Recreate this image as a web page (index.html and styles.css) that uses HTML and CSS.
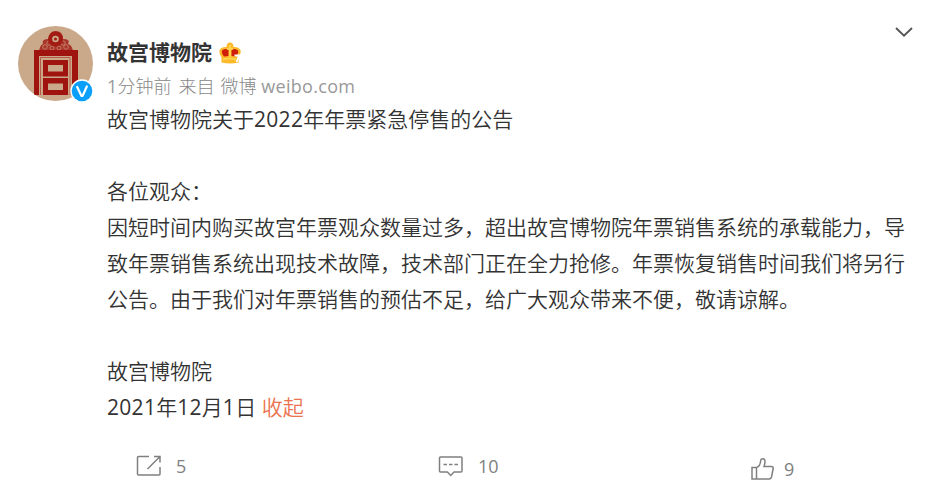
FILE: index.html
```html
<!DOCTYPE html>
<html lang="zh-CN">
<head>
  <meta charset="UTF-8" />
  <meta name="viewport" content="width=device-width, initial-scale=1.0" />
  <title>故宫博物院</title>
  <link rel="stylesheet" href="styles.css">
</head>
<body>

  <div class="card">
    <div class="avatar">
      <svg class="avatar-img" viewBox="0 0 75 75">
        <defs>
          <clipPath id="round"><circle cx="37.5" cy="37.5" r="37.5" /></clipPath>
        </defs>
        <g clip-path="url(#round)">
          <rect width="75" height="75" fill="#caa98a" />
          <path d="M21 25Q22 19 25 18Q23 13 31 13Q31 5 37.5 5Q45 5 45 13Q53 13 50 18Q54 19 55 25Z" fill="#a9352a" />
          <g fill="none" stroke="#c98b72" stroke-width=".8">
            <circle cx="27" cy="21" r="2.3" />
            <circle cx="31" cy="17" r="2.2" />
            <circle cx="34" cy="22" r="2" />
            <circle cx="45" cy="17" r="2.2" />
            <circle cx="41" cy="22" r="2" />
            <circle cx="48" cy="21" r="2.3" />
          </g>
          <circle cx="37.5" cy="13" r="7.5" fill="#a31a12" />
          <circle cx="37.5" cy="13" r="3.3" fill="#caa98a" />
          <circle cx="37.5" cy="13" r="1.5" fill="#a31a12" />
          <path d="M16 24H60V75H54V30H21V69H16Z" fill="#a01410" />
          <path d="M22.5 69V31.5H52V69" fill="none" stroke="#b65a47" stroke-width="1" />
          <path d="M25 34H50V50.500H25ZM30 39V45.500H45V39Z" fill="#a01410" fill-rule="evenodd" />
          <path d="M25 52H50V69H25ZM30 57.500V64H45V57.500Z" fill="#a01410" fill-rule="evenodd" />
        </g>
      </svg>
      <svg class="verified" viewBox="0 0 24 24">
        <circle cx="12" cy="12" r="11.700" fill="#fff" />
        <circle cx="12" cy="12" r="10.300" fill="#0a9ffb" />
        <path d="M7.200 8L11.200 16.500Q12 17.500 12.800 16.500L16.800 7.500" fill="none" stroke="#fff" stroke-width="2.200" stroke-linecap="round" />
      </svg>
    </div>

    <div class="main">
      <div class="header">
        <div class="name">
          <span>故宫博物院</span>
          <svg class="crown" viewBox="0 0 22 22">
            <path d="M2.500 20.500V15.500Q0 12 .3 8.500Q2 4.500 7.500 5Q7.500 .5 11 .5Q14.500 .5 14.500 5Q20 4.500 21.700 8.500Q22 12 19.500 15.500V20.500Q11 22.500 2.500 20.500Z" fill="#fdb92c" />
            <path d="M5 14.500Q1.500 10 3.500 8Q7 6 9.500 8V14ZM17 14.500Q20.500 10 18.500 8Q15 6 12.500 8V14Z" fill="#cf1f0b" />
            <path d="M8 7H14M11 3V15M4 17.500Q11 15.500 17 17.500" fill="none" stroke="#ffda50" stroke-width="1.600" />
            <path d="M15.500 13.500H20L17.500 20" fill="none" stroke="#fff" stroke-width="1.800" />
          </svg>
        </div>
        <svg class="arrow" viewBox="0 0 20 12">
          <path d="M2 2L10 9.700L18 2" fill="none" stroke="#555" stroke-width="1.900" />
        </svg>
      </div>
      <div class="meta"><span class="time"><span class="num">1</span>分钟前</span><span class="from">来自</span><span>微博 <span class="num">weibo.com</span></span></div>

      <div class="text">
        <p>故宫博物院关于<span class="num">2022</span>年年票紧急停售的公告</p>
        <p>各位观众：<br>因短时间内购买故宫年票观众数量过多，超出故宫博物院年票销售系统的承载能力，导致年票销售系统出现技术故障，技术部门正在全力抢修。年票恢复销售时间我们将另行公告。由于我们对年票销售的预估不足，给广大观众带来不便，敬请谅解。</p>
        <p>故宫博物院<br><span class="num">2021</span>年<span class="num">12</span>月<span class="num">1</span>日 <a class="fold">收起</a></p>
      </div>
    </div>
  </div>

  <div class="toolbar">
    <div class="action">
      <svg class="icon" viewBox="0 0 26 24">
        <path d="M13 2.500H2.500Q1.500 2.500 1.500 3.500V20Q1.500 21 2.500 21H23Q24 21 24 20V13M18 2.500H24V8.500M24 2.500L11.500 15" />
      </svg>
      <span>5</span>
    </div>
    <div class="action">
      <svg class="icon" viewBox="0 0 26 24">
        <path d="M2.500 3H23Q24 3 24 4V17Q24 18 23 18H16L12.700 21.500L9.400 18H2.500Q1.500 18 1.500 17V4Q1.500 3 2.500 3Z" />
        <path d="M5.500 10.500H9M11 10.500H14.500M16.500 10.500H20" />
      </svg>
      <span>10</span>
    </div>
    <div class="action like">
      <svg class="icon" viewBox="0 0 26 24">
        <path d="M2 10.500H6.500V22H2ZM6.500 10.500C10 9.500 10.500 6.500 10.700 3.500C11 .8 15 1 15 4.500C15 6.500 14.500 8 14 9.500H21.500Q23.500 9.500 23.200 11.500L21.500 20Q21 22 19 22H6.500" />
      </svg>
      <span>9</span>
    </div>
  </div>

</body>
</html>
```
FILE: styles.css
```css
* {
  box-sizing: border-box;
}
body {
  margin: 0;
  min-height: 493px;
  background: #fff;
  color: #333;
  font-family: "Open Sans", "Noto Sans CJK SC", sans-serif;
}
.card {
  display: flex;
  padding: 26px 25px 0 18px;
}
.avatar {
  position: relative;
  width: 75px;
  height: 75px;
  margin-right: 14px;
  flex-shrink: 0;
}
.avatar-img {
  display: block;
  width: 75px;
  height: 75px;
}
.verified {
  position: absolute;
  left: 52px;
  top: 53px;
  width: 24px;
  height: 24px;
}
.main {
  flex: 1;
}
.header {
  display: flex;
  justify-content: space-between;
  height: 45px;
}
.name {
  display: flex;
  height: 52px;
  line-height: 52px;
  font-size: 21px;
  font-weight: bold;
}
.crown {
  width: 22px;
  height: 22px;
  margin: 16px 0 0 7px;
}
.arrow {
  width: 20px;
  height: 12px;
}
.meta {
  height: 30px;
  line-height: 30px;
  font-size: 18px;
  font-weight: 300;
  color: #888;
}
.meta .num {
  color: #999;
}
.time {
  margin-right: 7px;
}
.from {
  margin-right: 6px;
}
.text {
  width: 800px;
  line-height: 36px;
  font-size: 21px;
  font-weight: 350;
}
.text p {
  margin: 0 0 36px;
}
.text p:last-child {
  margin-bottom: 28px;
}
.num {
  font-weight: 400;
  letter-spacing: .3px;
}
.fold {
  color: #eb7350;
}
.toolbar {
  display: grid;
  grid-template-columns: 302px 312px 1fr;
  padding-left: 136px;
}
.action {
  display: flex;
  align-items: center;
  height: 26px;
  font-size: 18px;
  color: #808080;
}
.icon {
  width: 26px;
  height: 24px;
  margin-right: 14px;
  fill: none;
  stroke: #808080;
  stroke-width: 1.5;
}
.like {
  padding-top: 5px;
}
.like .icon {
  margin-right: 8px;
}
```
